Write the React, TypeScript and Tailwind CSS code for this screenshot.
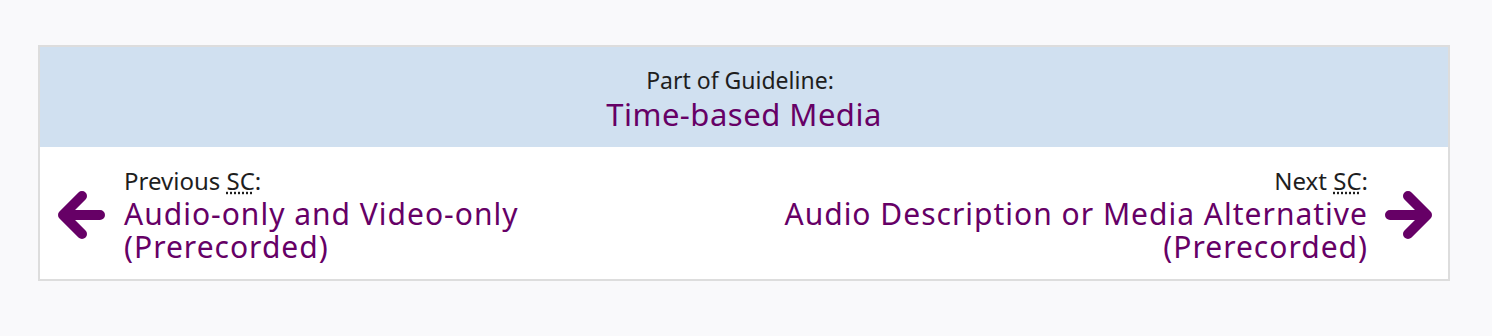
function Arrow({ dir }: { dir: 'left' | 'right' }) {
  return (
    <svg
      viewBox="0 0 48 50"
      className={`w-[48px] h-[50px] mt-[24px] shrink-0 text-[#660066] ${dir === 'left' ? '-scale-x-100' : ''}`}
      fill="none"
      stroke="currentColor"
      strokeWidth={10}
      strokeLinecap="round"
      strokeLinejoin="round"
      aria-hidden="true"
    >
      <path d="M6 25h36M24 6l19 19-19 19" />
    </svg>
  );
}

export default function App() {
  return (
    <div className="min-h-[336px] bg-[#f9f9fb] pt-[45px] pl-[38px] font-['Noto_Sans',sans-serif]">
      <nav className="w-[1412px] border-2 border-[#dddddd] bg-white">
        <div className="bg-[#d0e0f0] h-[100px] pt-[18px] flex flex-col items-center text-center">
          <p className="pr-[8px] text-[23px] leading-[30px] text-[#1e1e1e]">Part of Guideline:</p>
          <a href="#" className="text-[31px] leading-[38px] tracking-[0.5px] text-[#660066]">
            Time-based Media
          </a>
        </div>
        <div className="h-[132px] pt-[19px] flex items-start justify-between pl-[18px] pr-[16px]">
          <a href="#" className="flex items-start gap-[18px]">
            <Arrow dir="left" />
            <span className="flex flex-col">
              <span className="text-[24px] leading-[30px] text-[#1e1e1e]">
                Previous <abbr title="Success Criterion">SC</abbr>:
              </span>
              <span className="mt-[1px] text-[30px] leading-[33px] tracking-[1px] text-[#660066]">
                Audio-only and Video-only
                <br />
                (Prerecorded)
              </span>
            </span>
          </a>
          <a href="#" className="flex items-start gap-[16px] text-right">
            <span className="flex flex-col">
              <span className="text-[24px] leading-[30px] text-[#1e1e1e]">
                Next <abbr title="Success Criterion">SC</abbr>:
              </span>
              <span className="mt-[1px] text-[30px] leading-[33px] tracking-[1px] text-[#660066]">
                Audio Description or Media Alternative
                <br />
                (Prerecorded)
              </span>
            </span>
            <Arrow dir="right" />
          </a>
        </div>
      </nav>
    </div>
  );
}
